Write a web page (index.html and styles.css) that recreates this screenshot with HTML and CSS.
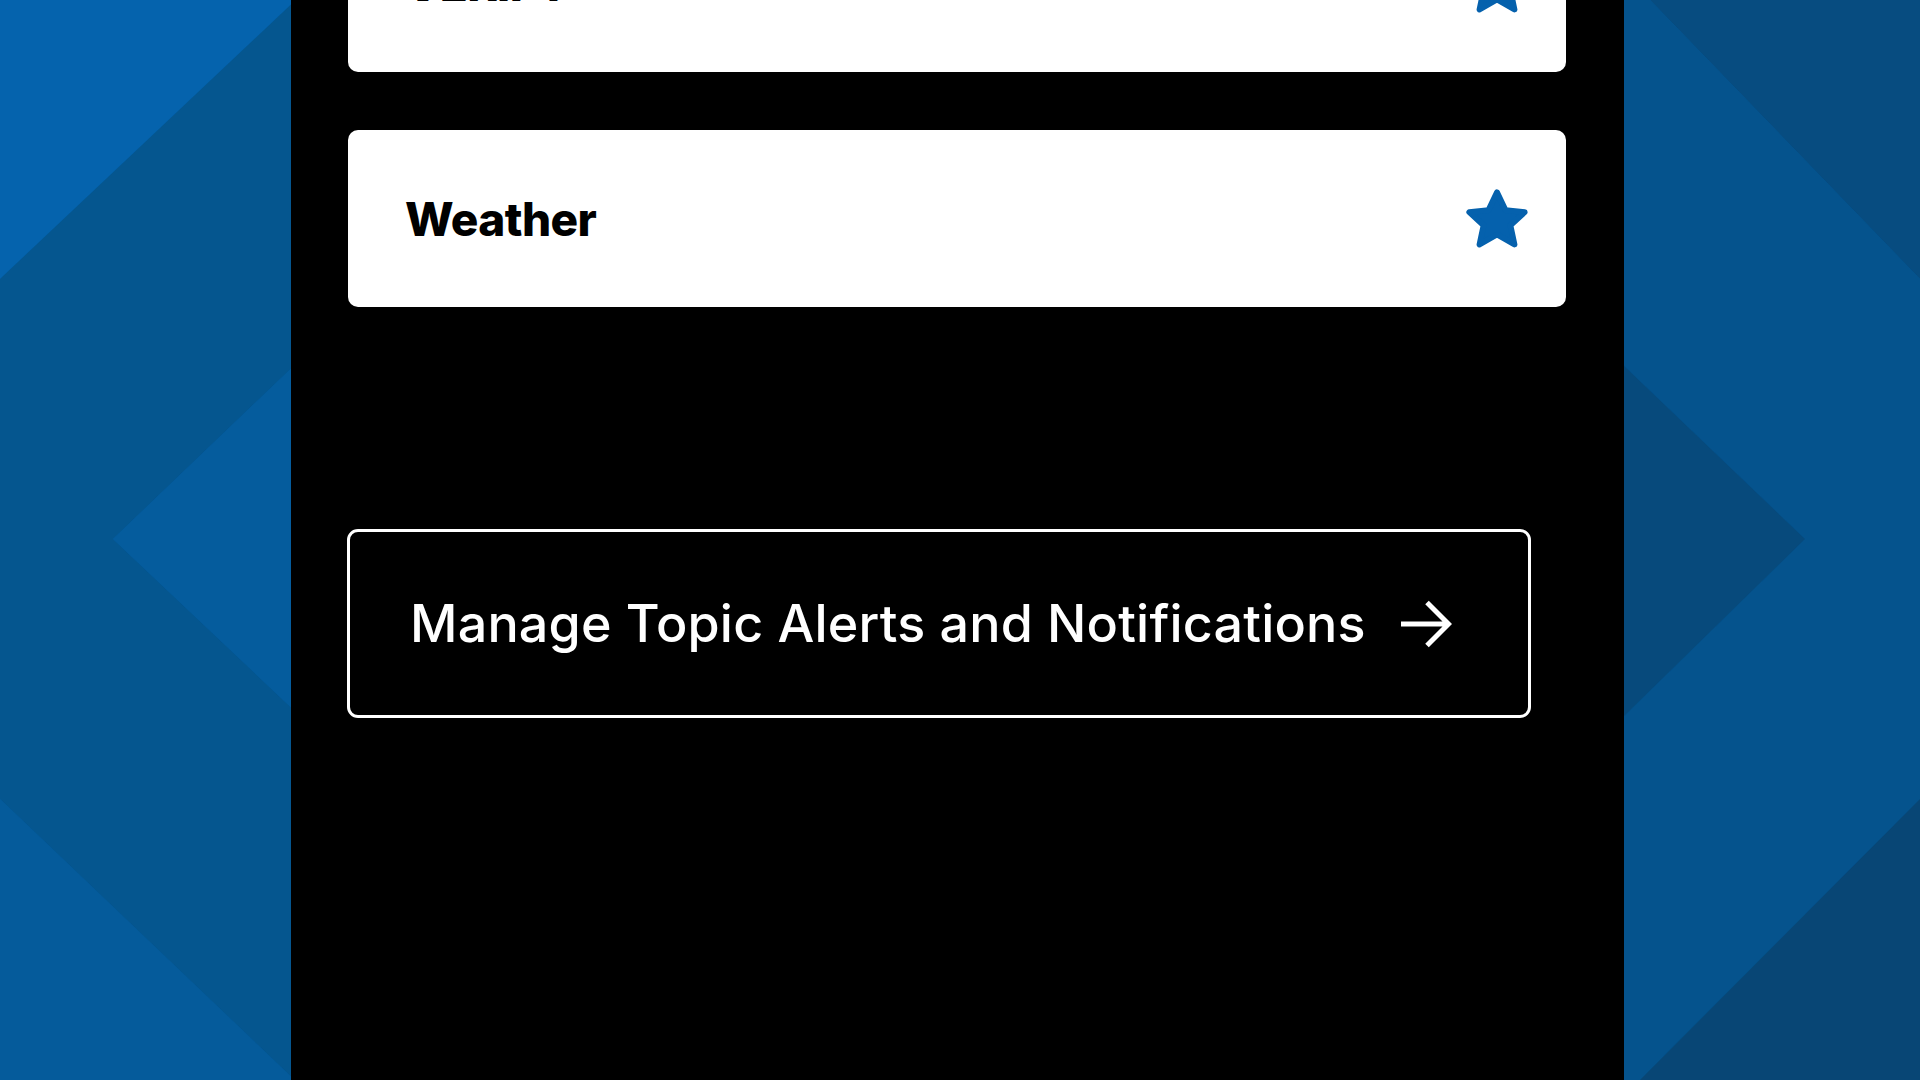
FILE: index.html
```html
<!DOCTYPE html>
<html lang="en">
<head>
    <meta charset="UTF-8">
    <meta name="viewport" content="width=device-width, initial-scale=1.0">
    <title>My Topics</title>
    <link rel="stylesheet" href="styles.css">
</head>
<body>
    <!-- Blue chevron backdrop behind the app column -->
    <svg class="backdrop" viewBox="0 0 1920 1080" preserveAspectRatio="none">
        <defs>
            <linearGradient id="bg-base" x1="0" y1="0" x2="1" y2="1">
                <stop offset="0" stop-color="#0561a9"/>
                <stop offset="1" stop-color="#05528a"/>
            </linearGradient>
        </defs>
        <rect width="1920" height="1080" fill="url(#bg-base)"/>
        <!-- left side -->
        <polygon points="0,0 300,0 300,-4 0,279" fill="#0563ad"/>
        <polygon points="0,279 300,-4 300,360 113,539 300,716 300,1085 0,799" fill="#05568f"/>
        <polygon points="113,539 300,360 300,716" fill="#055c9d"/>
        <polygon points="0,799 300,1085 0,1085" fill="#055b9b"/>
        <!-- right side -->
        <polygon points="1620,0 1920,0 1920,279 1650,0" fill="#074c80"/>
        <polygon points="1650,0 1920,279 1920,799 1640,1080 1620,1080 1620,720 1805,539 1620,362 1620,0" fill="#05538d"/>
        <polygon points="1620,362 1805,539 1620,720" fill="#074a7c"/>
        <polygon points="1640,1080 1920,799 1920,1080" fill="#084675"/>
    </svg>

    <div class="app">
        <div class="topic-list">
            <div class="topic">
                <span class="topic-name">VERIFY</span>
                <svg class="star" viewBox="0 0 24 24">
                    <polygon points="12,2.5 14.9,8.6 21.5,9.3 16.6,13.8 18,20.4 12,17 6,20.4 7.4,13.8 2.5,9.3 9.1,8.6"/>
                </svg>
            </div>
            <div class="topic">
                <span class="topic-name">Weather</span>
                <svg class="star" viewBox="0 0 24 24">
                    <polygon points="12,2.5 14.9,8.6 21.5,9.3 16.6,13.8 18,20.4 12,17 6,20.4 7.4,13.8 2.5,9.3 9.1,8.6"/>
                </svg>
            </div>
        </div>

        <button class="manage-btn" type="button">
            <span>Manage Topic Alerts and Notifications</span>
            <svg class="arrow" viewBox="0 0 52 50">
                <path d="M1 25 H48 M27 3.5 L48.5 25 L27 46.5"/>
            </svg>
        </button>
    </div>
</body>
</html>
```

FILE: styles.css
```css
body {
    margin: 0;
    padding: 0;
    width: 1920px;
    height: 1080px;
    overflow: hidden;
    position: relative;
    font-family: "Inter", "Liberation Sans", sans-serif;
    background-color: #05568f;
}

.backdrop {
    position: absolute;
    top: 0;
    left: 0;
    width: 1920px;
    height: 1080px;
}

.app {
    position: relative;
    margin-left: 291px;
    width: 1333px;
    height: 1080px;
    background-color: #000;
    overflow: hidden;
}

.topic-list {
    display: flex;
    flex-direction: column;
    gap: 58px;
    margin-top: -105px;
    padding: 0 58px 0 57px;
}

.topic {
    display: flex;
    align-items: center;
    justify-content: space-between;
    height: 177px;
    padding: 0 34px 0 57px;
    background-color: #fff;
    border-radius: 10px;
}

.topic-name {
    font-size: 46px;
    font-weight: 800;
    color: #000;
    letter-spacing: -0.6px;
}

.star {
    width: 70px;
    height: 70px;
    margin-top: 3px;
}

.star polygon {
    fill: #0561ad;
    stroke: #0561ad;
    stroke-width: 2;
    stroke-linejoin: round;
}

.manage-btn {
    display: flex;
    align-items: center;
    gap: 34px;
    box-sizing: border-box;
    width: 1184px;
    height: 189px;
    margin: 222px 0 0 56px;
    padding: 0 0 0 60px;
    background-color: #000;
    border: 3px solid #fff;
    border-radius: 11px;
    color: #fff;
    font-family: "Inter", "Liberation Sans", sans-serif;
    font-size: 52px;
    font-weight: 500;
    letter-spacing: 0.2px;
    cursor: pointer;
}

.arrow {
    width: 52px;
    height: 50px;
    flex-shrink: 0;
}

.arrow path {
    fill: none;
    stroke: #fff;
    stroke-width: 5;
}
```
